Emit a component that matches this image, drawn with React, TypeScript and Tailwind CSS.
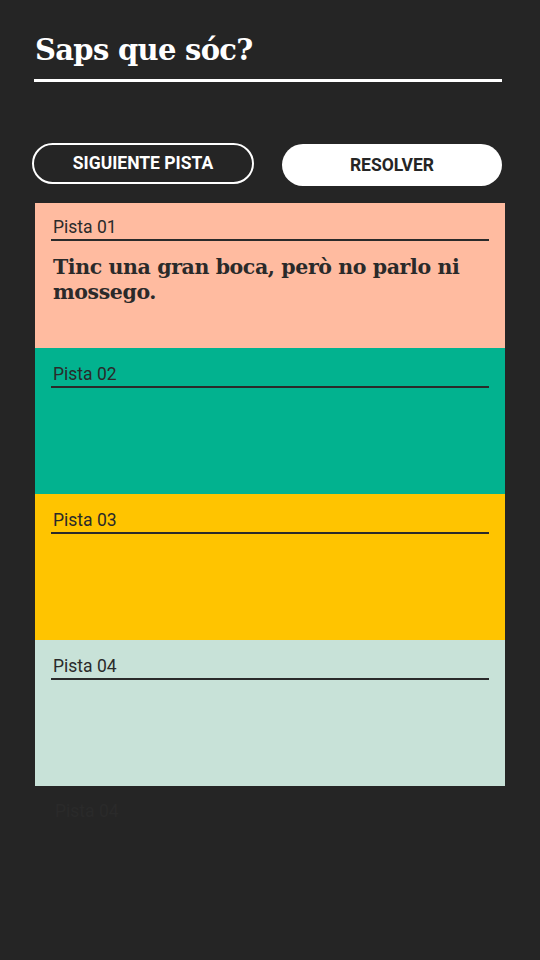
const clues = [
  { n: '01', bg: 'bg-[#ffbba0]', text: 'Tinc una gran boca, però no parlo ni mossego.' },
  { n: '02', bg: 'bg-[#02b28f]', text: '' },
  { n: '03', bg: 'bg-[#ffc400]', text: '' },
  { n: '04', bg: 'bg-[#c8e2d8]', text: '' },
];

const slab = { fontFamily: '"DejaVu Serif", "Liberation Serif", serif' };
const roboto = { fontFamily: 'Roboto, "Liberation Sans", sans-serif' };

export default function App() {
  return (
    <div className="min-h-[960px] w-[540px] bg-[#252525]" style={roboto}>
      {/* Header */}
      <div className="px-[34px] pt-[30px]">
        <h1
          className="text-[29px] font-bold leading-[40px] text-white tracking-[-0.7px] pl-[1px]"
          style={slab}
        >
          Saps que sóc?
        </h1>
        <div className="mt-[9px] h-[3px] w-[468px] bg-white" />
      </div>

      {/* Buttons */}
      <div className="mt-[61px] flex items-start gap-[28px] pl-[32px]">
        <button className="flex h-[41px] w-[222px] items-center justify-center rounded-full border-2 border-white text-[17.5px] font-bold text-white">
          SIGUIENTE PISTA
        </button>
        <button className="mt-[1px] flex h-[42px] w-[220px] items-center justify-center rounded-full bg-white text-[17.5px] font-bold text-[#252525]">
          RESOLVER
        </button>
      </div>

      {/* Clues */}
      <div className="mt-[17px] ml-[35px] w-[470px]">
        {clues.map((c, i) => (
          <div
            key={c.n}
            className={`${c.bg} ${i === 0 ? 'h-[145px] pt-[13px]' : 'h-[146px] pt-[15px]'} px-[16px]`}
          >
            <div className="border-b-2 border-[#2a2a2a] pb-[1px] pl-[2px] text-[17.5px] leading-[22px] text-[#2a2a2a]">
              Pista {c.n}
            </div>
            {c.text && (
              <p
                className="mt-[14px] pl-[2px] text-[20.5px] font-bold leading-[25px] text-[#2a2a2a] tracking-[-0.4px]"
                style={slab}
              >
                {c.text}
              </p>
            )}
          </div>
        ))}
      </div>

      {/* faint ghost label */}
      <div className="ml-[55px] mt-[14px] text-[17.5px] leading-[22px] text-[#2a2a2a]">Pista 04</div>
    </div>
  );
}
